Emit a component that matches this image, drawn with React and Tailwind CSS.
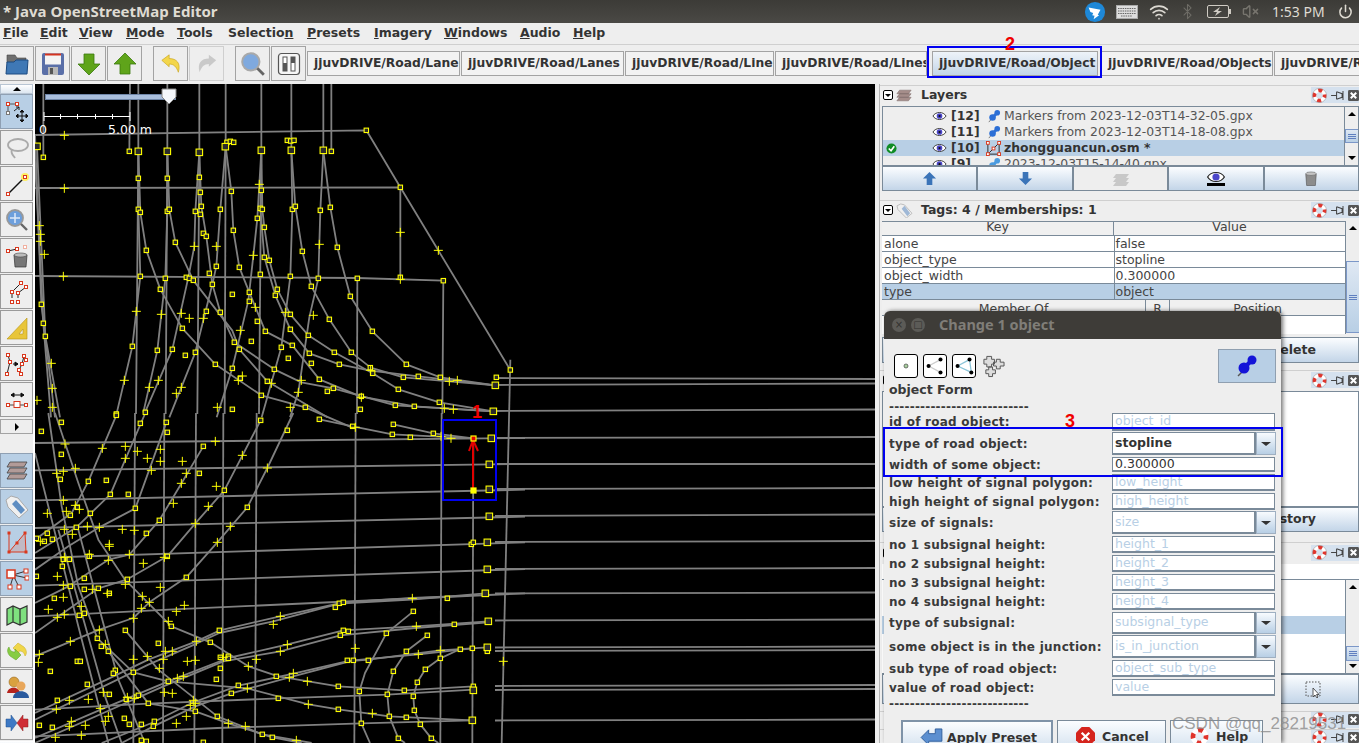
import { Wifi, Bluetooth, VolumeX, Power } from "lucide-react";

// Map data was read off two crops at 3x, so coordinates stay in crop space.
const top = ([x, y]) => [35 + x / 3, 84 + y / 3];
const low = ([x, y]) => [35 + x / 3, 413 + y / 3];

const TOP_WAYS = [
  [[0,153],[994,139],[1096,310],[1426,858]],
  [[0,312],[1096,310],[1096,586]],
  [[0,576],[967,582],[1225,590],[1222,990]],
  [[967,582],[966,990]],
  [[25,0],[25,220]],
  [[285,0],[283,202]],
  [[889,0],[889,202]],
  [[865,0],[865,200]],
  [[769,0],[769,200]],
  [[679,0],[679,200]],
  [[572,0],[572,188]],
  [[310,0],[310,202],[303,990]],
  [[397,0],[397,202],[392,990]],
  [[493,0],[493,205],[487,990]],
  [[572,188],[569,990]],
  [[679,200],[672,990]],
  [[865,200],[886,370],[907,490],[946,637],[1012,742],[1114,841],[1216,880],[1381,904]],
  [[769,200],[781,367],[802,502],[829,607],[883,706],[949,805],[1007,851],[1105,880],[1381,904]],
  [[679,200],[682,376],[688,430],[703,529],[727,616],[766,691],[820,754],[898,805],[1013,868],[1090,916],[1213,955],[1375,982]],
  [[679,200],[676,373],[688,520],[721,634],[766,736],[823,808],[913,841],[1006,860],[1150,877],[1381,904]],
  [[572,188],[589,322],[595,439],[613,550],[643,625],[691,742],[772,784],[853,886],[976,937],[1138,967],[1375,982]],
  [[493,205],[499,367],[514,457],[532,601],[556,685],[598,775],[718,856],[799,895],[895,913],[1081,964],[1375,982]],
  [[397,202],[403,376],[421,475],[475,589],[592,740],[613,796],[697,892],[877,1000]],
  [[310,202],[316,385],[334,499],[376,616],[442,733],[541,841],[679,934],[811,970],[950,1030]],
  [[865,200],[856,379],[850,583],[823,700],[790,925],[765,1000]],
  [[769,200],[772,376],[766,577],[739,790],[680,1000]],
  [[679,200],[667,403],[655,515],[640,650],[592,853],[545,1000]],
  [[572,188],[556,376],[544,547],[532,601],[481,805],[403,1000]],
  [[493,205],[481,382],[478,487],[460,580],[412,796],[330,985]],
  [[397,202],[397,382],[391,583],[367,799],[325,985]],
  [[310,202],[310,376],[316,577],[292,787],[245,988]],
  [[0,150],[19,661],[60,1000]],
  [[6,187],[31,757],[75,1000]],
  [[0,230],[25,718],[48,1000]],
];

const LOW_WAYS = [
  [[1426,-160],[1400,990]],
  [[1315,76],[1312,990]],
  [[300,0],[295,990]],
  [[388,0],[384,990]],
  [[483,0],[478,990]],
  [[565,0],[562,990]],
  [[665,0],[660,990]],
  [[962,0],[958,990]],
  [[1220,0],[1216,990]],
  [[0,90],[1470,75]],
  [[0,172],[1470,153]],
  [[0,262],[1470,230]],
  [[0,345],[1470,311]],
  [[0,435],[1470,388]],
  [[0,518],[1470,468]],
  [[0,610],[400,590],[1470,541]],
  [[1300,548],[1133,555],[925,568],[735,610],[555,652],[484,685],[340,740],[215,800],[0,900]],
  [[1350,541],[1130,560],[913,572],[715,625],[553,660],[466,700],[340,755],[0,920]],
  [[1360,625],[1140,640],[925,652],[755,695],[580,735],[400,805],[220,880],[0,975]],
  [[1360,628],[1140,645],[916,667],[736,715],[565,745],[385,820],[205,900],[0,990]],
  [[1357,703],[1215,712],[1000,740],[935,745],[775,782],[610,818],[470,870],[350,930],[200,990]],
  [[1312,706],[1150,724],[955,742],[763,793],[589,841],[481,880],[355,940],[260,990]],
  [[1315,830],[1057,845],[730,856],[340,872],[0,890]],
  [[1312,922],[979,931],[547,945],[0,970]],
  [[1315,820],[1108,832],[910,820],[730,790],[640,760],[526,688],[409,640],[270,500],[190,380],[130,210],[60,0]],
  [[1312,922],[1063,910],[910,889],[820,874],[637,826],[400,805],[295,778],[187,676],[130,520],[80,280],[40,0]],
  [[271,652],[370,770],[547,910],[682,964],[830,990]],
  [[220,715],[340,871],[481,895],[580,931],[712,973],[800,990]],
  [[1135,595],[1054,661],[990,780],[973,835],[979,931],[1005,990]],
  [[1177,667],[1114,715],[1075,775],[1057,845],[1063,910],[1090,976],[1110,990]],
  [[1276,708],[1216,736],[1171,769],[1147,808],[1135,850],[1138,892],[1156,934],[1189,976],[1210,990]],
  [[853,19],[953,40],[1072,64],[1195,70],[1315,76]],
  [[1075,34],[1195,61],[1315,76]],
  [[775,0],[697,165],[637,283],[547,388],[454,493],[343,568],[295,615],[193,650],[0,730]],
  [[677,22],[568,232],[481,331],[397,430],[277,499],[190,526],[85,600],[0,660]],
  [[505,100],[440,210],[373,322],[283,425],[220,440],[100,520],[0,570]],
  [[394,28],[301,286],[193,343],[100,400],[0,470]],
  [[331,0],[226,244],[124,343],[0,420]],
  [[244,7],[160,205],[110,300],[0,380]],
  [[130,350],[250,800],[330,990]],
  [[70,350],[210,850],[260,990]],
  [[0,120],[130,640],[220,990]],
];

const TOP_NODES = [[25,220],[283,202],[889,202],[310,283],[397,283],[493,280],[496,325],[589,322],[679,319],[310,376],[316,385],[397,382],[403,376],[481,382],[499,367],[496,391],[556,376],[676,373],[682,376],[667,403],[688,430],[772,376],[781,367],[856,379],[886,370],[595,439],[505,448],[514,457],[421,475],[334,499],[907,490],[802,502],[688,520],[703,529],[544,547],[613,550],[523,568],[676,571],[766,577],[316,577],[391,583],[454,580],[463,583],[475,589],[850,583],[967,583],[1096,580],[1225,590],[1096,310],[994,139],[532,601],[829,607],[376,616],[592,631],[643,625],[721,634],[727,616],[946,637],[643,652],[19,661],[514,682],[556,685],[766,691],[883,706],[25,718],[667,712],[442,733],[691,742],[766,736],[1012,742],[820,754],[31,757],[598,775],[649,772],[772,784],[292,787],[367,799],[412,796],[613,796],[739,790],[823,808],[898,805],[949,805],[451,814],[481,805],[760,823],[541,841],[829,838],[913,841],[1114,841],[592,853],[718,856],[1006,851],[1013,868],[1426,858],[1105,880],[1150,877],[1216,880],[1384,880],[616,883],[853,886],[697,892],[895,913],[877,922],[1090,916],[679,934],[979,937],[1213,955],[1081,964],[1138,967],[811,970],[592,976],[976,976],[331,985],[244,990],[576,175],[586,172],[596,175],[757,169],[767,171],[777,169]];
const TOP_BIG = [[310,202],[397,202],[493,205],[571,188],[679,199],[769,199],[865,199],[6,187],[1381,904],[1375,982]];
const TOP_CROSS = [[88,154],[88,313],[673,301],[13,425],[16,451],[16,472],[28,511],[85,577],[1096,445],[1096,586],[1210,499],[478,487],[544,487],[655,514],[853,481],[661,670],[304,682],[379,691],[439,688],[463,703],[505,703],[751,685],[835,694],[616,739],[49,838],[268,889],[343,910],[370,889],[439,910],[424,928],[610,889],[622,876],[709,898],[799,889],[790,925],[52,913],[52,970],[6,949],[547,970],[766,970],[979,940],[1007,859],[1243,892],[1267,889],[1228,973],[1255,976]];
const LOW_NODES = [[19,55],[79,28],[244,7],[316,31],[394,28],[397,58],[677,22],[757,52],[853,19],[953,40],[1075,34],[1072,64],[1126,73],[1195,61],[79,124],[505,100],[493,181],[76,199],[160,205],[214,202],[568,232],[226,244],[280,244],[127,283],[166,301],[106,307],[301,286],[637,283],[373,322],[124,343],[37,361],[52,379],[4,376],[28,385],[334,361],[397,430],[85,439],[103,439],[82,460],[163,430],[4,490],[148,496],[277,499],[454,493],[106,520],[148,529],[190,526],[58,556],[223,541],[133,607],[148,601],[409,640],[271,652],[187,676],[199,700],[220,715],[370,691],[526,688],[553,652],[127,745],[136,745],[46,775],[241,772],[235,781],[295,778],[556,766],[544,799],[400,805],[157,814],[223,844],[310,847],[274,859],[67,862],[340,871],[481,895],[589,841],[610,817],[556,733],[580,730],[580,736],[724,790],[730,856],[910,820],[910,889],[547,910],[268,916],[13,937],[52,943],[283,934],[319,934],[358,925],[355,940],[319,982],[334,985],[505,988],[682,964],[712,973],[901,583],[913,571],[925,568],[916,667],[925,652],[940,655],[955,742],[937,742],[1000,742],[973,835],[979,931],[1057,844],[1063,910],[1108,832],[1114,913],[1135,850],[1138,892],[1156,934],[1147,808],[1171,769],[1216,736],[1177,667],[1114,715],[1075,775],[1054,661],[1135,595],[1237,556],[1258,634],[1276,709],[1312,706],[1309,394],[1315,388],[1315,820],[1090,976],[1189,976],[1357,715]];
const LOW_BIG = [[1369,76],[1363,154],[1363,229],[1363,310],[1357,388],[1357,469],[1351,541],[1360,625],[1357,703],[1315,832],[1312,922]];
const LOW_CROSS = [[90,93],[202,106],[271,100],[307,115],[376,109],[541,85],[271,136],[337,136],[622,127],[376,145],[442,145],[65,181],[85,175],[121,166],[349,172],[454,181],[697,165],[544,220],[439,211],[520,280],[85,262],[121,277],[133,289],[37,301],[94,295],[415,271],[481,331],[88,349],[157,340],[193,343],[112,364],[262,349],[298,352],[586,340],[16,385],[547,388],[223,394],[223,400],[163,424],[283,424],[388,433],[88,433],[220,442],[325,451],[67,490],[85,517],[172,529],[271,514],[217,541],[376,523],[85,553],[322,550],[343,568],[319,586],[40,589],[139,580],[448,577],[424,595],[295,616],[67,613],[88,604],[400,625],[193,651],[106,685],[484,685],[211,694],[13,724],[10,748],[295,739],[337,730],[391,715],[412,715],[385,739],[457,745],[481,742],[373,766],[664,739],[640,760],[427,796],[445,790],[565,733],[736,610],[715,634],[757,695],[736,715],[775,781],[763,793],[817,805],[637,826],[205,838],[103,862],[160,859],[277,853],[298,856],[388,838],[412,841],[475,862],[466,877],[481,871],[196,886],[64,889],[220,910],[454,910],[424,931],[580,931],[631,940],[820,874],[109,925],[103,940],[151,937],[211,925],[139,967],[61,973],[1012,901],[961,706],[961,43],[1216,712],[1150,724],[1144,640],[1132,556],[1248,76],[1218,70],[784,982],[1405,745]];

// Long roads running off to the right edge of the canvas.
const EAST_ROADS = [[378,379],[385,383.5],[411,409.5],[438,437],[464,464],[489,488],[516,514.5],[542,541],[569,568],[593.5,592.5],[620.5,619.5],[647.5,646.5],[651,650],[686,685],[690,689],[720.5,719.5]];

const pts = (way, map) => way.map((p) => map(p).join(",")).join(" ");

function Square({ at, size = 4.4 }) {
  const [x, y] = at;
  return <rect x={x - size / 2} y={y - size / 2} width={size} height={size} fill="#2a2a2a" stroke="#ffff00" strokeWidth="1.1" />;
}

function Cross({ at }) {
  const [x, y] = at;
  return <path d={`M${x - 4.5} ${y}H${x + 4.5}M${x} ${y - 4.5}V${y + 4.5}`} stroke="#ffff00" strokeWidth="1" fill="none" />;
}

function MapCanvas() {
  return (
    <svg viewBox="35 84 840 659" className="w-[840px] h-[659px] block bg-black" fontFamily="'DejaVu Sans', sans-serif">
      <g fill="none" stroke="#808080" strokeWidth="1.8" strokeLinejoin="round">
        {TOP_WAYS.map((w, i) => <polyline key={i} points={pts(w, top)} />)}
        {LOW_WAYS.map((w, i) => <polyline key={i} points={pts(w, low)} />)}
        {EAST_ROADS.map(([a, b], i) => <line key={i} x1="495" y1={a} x2="875" y2={b} />)}
      </g>
      {TOP_NODES.map((p, i) => <Square key={i} at={top(p)} />)}
      {LOW_NODES.map((p, i) => <Square key={i} at={low(p)} />)}
      {TOP_BIG.map((p, i) => <Square key={i} at={top(p)} size={6.5} />)}
      {LOW_BIG.map((p, i) => <Square key={i} at={low(p)} size={6.5} />)}
      {TOP_CROSS.map((p, i) => <Cross key={i} at={top(p)} />)}
      {LOW_CROSS.map((p, i) => <Cross key={i} at={low(p)} />)}

      {/* selected stop line */}
      <path d="M473 490V440M469 451L473 440L478 451" fill="none" stroke="#e00000" strokeWidth="2" />
      <rect x="471" y="436" width="5" height="5" fill="#e00000" stroke="#ffff00" strokeWidth="1.2" />
      <rect x="471" y="488" width="5" height="5" fill="#ffff00" stroke="#ffff00" strokeWidth="1.2" />

      {/* zoom slider and scale */}
      <rect x="45.5" y="94.5" width="130" height="5" fill="#fff" stroke="#6f86a8" />
      <rect x="46" y="95" width="118" height="4" fill="#a9bedc" />
      <path d="M162 89H176V97L169 104L162 97Z" fill="#f4f7fb" stroke="#888" />
      <path d="M44 112V121M130 112V121M44 116.500H130M60.500 114V119M77.500 114V119M95.500 114V119M112.500 114V119" stroke="#fff" strokeWidth="1" fill="none" />
      <text x="39" y="134" fill="#fff" fontSize="12.500">0</text>
      <text x="108" y="134" fill="#fff" fontSize="12.500">5.00 m</text>
    </svg>
  );
}

function DingTalk() {
  return (
    <svg viewBox="0 0 24 24" className="w-[22px] h-[22px]">
      <circle cx="12" cy="12" r="11" fill="#1e88d8" />
      <path d="M5 7L18 9.500L15 15L16.500 15.500L10.500 20L11.500 16L9 15.500L10 13L7 12Z" fill="#fff" />
    </svg>
  );
}

function Tray() {
  return (
    <div className="ml-auto flex items-center text-[#bdb9b1]">
      <DingTalk />
      <svg viewBox="0 0 22 14" className="w-[22px] h-[14px] ml-[10px]">
        <rect x="0.500" y="0.500" width="21" height="13" fill="#ddd" stroke="#aaa" />
        <path d="M2 3.500H20M2 6H20M2 8.500H20M5 11H16" stroke="#666" strokeDasharray="1.500 .8" />
      </svg>
      <Wifi size={20} strokeWidth={2} className="ml-[11px] text-[#dcd9d2]" />
      <Bluetooth size={17} strokeWidth={1.5} className="ml-[10px] text-[#6e6c66]" />
      <svg viewBox="0 0 24 13" className="w-[24px] h-[13px] ml-[11px]">
        <rect x="0.500" y="0.500" width="21" height="12" rx="1.500" fill="none" stroke="#cfcbc3" />
        <rect x="22" y="4" width="2" height="5" fill="#cfcbc3" />
        <path d="M13 2L6 7H10L8 11L15 6H11Z" fill="#cfcbc3" />
      </svg>
      <VolumeX size={17} className="ml-[11px] text-[#77756e]" />
      <span className="ml-[13px] w-[56px] text-[14px] font-['Noto_Sans',sans-serif] text-[#dfdbd2]">1:53 PM</span>
      <Power size={15} strokeWidth={2.4} className="ml-[10px] mr-[6px] text-[#dfdbd2]" />
    </div>
  );
}

const MENUS = [
  ["", "F", "ile", 37],
  ["", "E", "dit", 39],
  ["", "V", "iew", 47],
  ["", "M", "ode", 51],
  ["", "T", "ools", 51],
  ["Selectio", "n", "", 79],
  ["", "P", "resets", 67],
  ["", "I", "magery", 70],
  ["", "W", "indows", 76],
  ["", "A", "udio", 53],
  ["", "H", "elp", 36],
];

function MenuBar() {
  return (
    <div className="h-[21px] flex items-center pl-[3px] bg-[#eeeeee] font-bold text-[12.500px] text-[#333333]">
      {MENUS.map(([a, u, b, w]) => (
        <span key={u + b} className="whitespace-nowrap" style={{ width: w }}>
          {a}<span className="underline">{u}</span>{b}
        </span>
      ))}
    </div>
  );
}

function ToolIcon({ name }) {
  switch (name) {
    case "open":
      return (
        <svg viewBox="0 0 24 24" className="w-[24px] h-[24px]">
          <path d="M2 3H10L12 6H21V11H2Z" fill="#6f6f6f" stroke="#444" strokeWidth=".6" />
          <path d="M1 22L2 10H9L11 8H23L22 22Z" fill="#3f78b5" stroke="#1c4a80" />
        </svg>
      );
    case "save":
      return (
        <svg viewBox="0 0 24 24" className="w-[24px] h-[24px]">
          <rect x="1" y="1" width="22" height="22" rx="2" fill="#5a6fa8" />
          <rect x="4" y="1.500" width="16" height="11" fill="#f4f4f4" />
          <rect x="4" y="1.500" width="16" height="2" fill="#d4341f" />
          <rect x="7" y="15" width="10" height="8" fill="#b8b8b8" />
          <rect x="9" y="16" width="3" height="6" fill="#555" />
        </svg>
      );
    case "down":
      return (
        <svg viewBox="0 0 24 24" className="w-[24px] h-[24px]">
          <path d="M7 2H17V12H23L12 23L1 12H7Z" fill="#5fa41a" stroke="#3a7a0c" strokeWidth=".8" />
        </svg>
      );
    case "up":
      return (
        <svg viewBox="0 0 24 24" className="w-[24px] h-[24px]">
          <path d="M7 22H17V12H23L12 1L1 12H7Z" fill="#5fa41a" stroke="#3a7a0c" strokeWidth=".8" />
        </svg>
      );
    case "undo":
      return (
        <svg viewBox="0 0 24 24" className="w-[22px] h-[22px]">
          <path d="M2 8L10 2V6C18 6 23 11 20 21C18 15 15 12 10 12V15Z" fill="#f3d64b" stroke="#c9a51a" strokeWidth=".7" />
        </svg>
      );
    case "redo":
      return (
        <svg viewBox="0 0 24 24" className="w-[22px] h-[22px]">
          <path d="M22 8L14 2V6C6 6 1 11 4 21C6 15 9 12 14 12V15Z" fill="#c9c9c9" />
        </svg>
      );
    case "zoom":
      return (
        <svg viewBox="0 0 24 24" className="w-[26px] h-[26px]">
          <circle cx="10" cy="10" r="8" fill="#7fa9de" stroke="#a9a9a9" strokeWidth="1.800" />
          <path d="M16 16L22 22" stroke="#666" strokeWidth="2.600" />
        </svg>
      );
    default:
      return (
        <svg viewBox="0 0 24 24" className="w-[24px] h-[24px]">
          <rect x="1.500" y="1.500" width="21" height="21" rx="3" fill="#f6f6f6" stroke="#555" strokeWidth="1.200" />
          <rect x="6" y="5" width="4" height="14" fill="#fff" stroke="#555" />
          <rect x="14" y="5" width="4" height="14" fill="#fff" stroke="#555" />
          <rect x="6" y="11" width="4" height="8" fill="#555" />
          <rect x="14" y="5" width="4" height="6" fill="#555" />
        </svg>
      );
  }
}

function ToolButton({ name, disabled }) {
  return (
    <div className={`w-[35px] h-[35px] shrink-0 flex items-center justify-center border ${disabled ? "border-[#cfcfcf]" : "border-[#a3a3a3]"} bg-[#eeeeee]`}>
      <ToolIcon name={name} />
    </div>
  );
}

function PresetButton({ label, w, active }) {
  return (
    <div
      style={{ width: w }}
      className={`h-[25px] shrink-0 flex items-center pl-[6px] overflow-hidden whitespace-nowrap font-bold text-[12.300px] text-[#333333] border border-[#a3a3a3] ${active ? "bg-gradient-to-b from-[#eef3f9] to-[#c3d5e8]" : "bg-[#f2f2f2]"}`}
    >
      {label}
    </div>
  );
}

function Toolbar() {
  return (
    <div className="h-[40px] flex items-center gap-[1px] -ml-[1px] border-t border-[#cfcfcf] bg-[#eeeeee] pb-[2px]">
      <ToolButton name="open" />
      <ToolButton name="save" />
      <ToolButton name="down" />
      <ToolButton name="up" />
      <div className="w-[9px] shrink-0" />
      <ToolButton name="undo" />
      <ToolButton name="redo" disabled />
      <div className="w-[9px] shrink-0" />
      <ToolButton name="zoom" />
      <ToolButton name="prefs" />
      <PresetButton label="jjuvDRIVE/Road/Lane" w={153} />
      <PresetButton label="jjuvDRIVE/Road/Lanes" w={163} />
      <PresetButton label="jjuvDRIVE/Road/Line" w={149} />
      <PresetButton label="jjuvDRIVE/Road/Lines" w={152} />
      <div className="w-[3px] shrink-0" />
      <PresetButton label="jjuvDRIVE/Road/Object" w={166} active />
      <div className="w-[1px] shrink-0" />
      <PresetButton label="jjuvDRIVE/Road/Objects" w={172} />
      <PresetButton label="jjuvDRIVE/Road/Objects" w={100} />
    </div>
  );
}

const RED = "#d9381e";

function SideIcon({ name }) {
  const node = (x, y, c = RED) => <rect x={x - 1.500} y={y - 1.500} width="3" height="3" fill="#fff" stroke={c} />;
  const shapes = {
    select: (
      <>
        <path d="M3 4H11M3 4V12" stroke="#555" fill="none" />
        {node(3, 4)}{node(12, 4)}{node(3, 13, "#777")}
        <path d="M9 11L14 7M14 7H11M14 7V10" stroke="#222" fill="none" />
        <path d="M17 10V22M11 16H23M17 10L15 12H19ZM17 22L15 20H19ZM11 16L13 14V18ZM23 16L21 14V18Z" stroke="#111" fill="#111" />
      </>
    ),
    lasso: (
      <>
        <ellipse cx="13" cy="9" rx="10" ry="6" fill="none" stroke="#aaa" strokeWidth="1.800" />
        <path d="M7 13C5 18 9 20 10 22" fill="none" stroke="#aaa" strokeWidth="1.800" />
      </>
    ),
    draw: (
      <>
        <path d="M3 22L20 5" stroke="#111" strokeWidth="1.500" />
        <circle cx="20" cy="5" r="4" fill="#ffef60" />
        {node(3, 22)}{node(20, 5)}
      </>
    ),
    zoom: (
      <>
        <circle cx="10" cy="10" r="8" fill="#6d9fdc" stroke="#999" strokeWidth="1.800" />
        <path d="M10 5V15M5 10H15" stroke="#dfeaf7" strokeWidth="1.500" />
        <path d="M16 16L22 22" stroke="#666" strokeWidth="2.400" />
      </>
    ),
    delete: (
      <>
        <path d="M3 7L12 5" stroke="#222" />
        {node(3, 7)}{node(12, 5)}{node(20, 3, "#f0b0a0")}
        <path d="M9 11H22L21 23H10Z" fill="#777" stroke="#333" strokeWidth=".7" />
        <ellipse cx="15.500" cy="11" rx="6.500" ry="2" fill="#bbb" stroke="#444" strokeWidth=".6" />
      </>
    ),
    parallel: (
      <>
        <path d="M7 18V12L16 3M13 18V13L21 7" stroke="#222" fill="none" />
        {node(7, 22)}{node(7, 12)}{node(16, 3)}{node(13, 22)}{node(13, 13)}{node(21, 7)}
      </>
    ),
    angle: <path d="M2 23L22 2V23ZM14 18H18V13Z" fill="#e8c53a" fillRule="evenodd" stroke="#b69417" strokeWidth=".6" />,
    improve: (
      <>
        <path d="M3 3L5 10L2 22M19 4L17 12L14 18L16 22" stroke="#222" fill="none" />
        <path d="M8 12H13M13 12L10 10V14Z" stroke="#111" fill="#111" />
        {node(3, 3)}{node(5, 10)}{node(2, 22)}{node(19, 4)}{node(21, 8)}{node(17, 12)}{node(14, 18)}{node(16, 22)}
      </>
    ),
    split: (
      <>
        <path d="M6 7H19M6 7L9 5V9ZM19 7L16 5V9Z" stroke="#111" fill="#111" />
        <path d="M3 17H22" stroke="#444" />
        <rect x="9" y="13.500" width="6" height="6" fill="#fff" stroke={RED} />
        {node(3, 17)}{node(21, 17)}
      </>
    ),
    layers: (
      <>
        <path d="M5 3H22L19 8H2Z" fill="#b29b98" stroke="#444" strokeWidth=".8" />
        <path d="M5 9H22L19 14H2Z" fill="#b29b98" stroke="#444" strokeWidth=".8" />
        <path d="M5 15H22L19 20H2Z" fill="#b29b98" stroke="#444" strokeWidth=".8" />
      </>
    ),
    tag: (
      <>
        <path d="M1 5L6 1L13 3L23 15L14 23L3 12Z" fill="#f0f0f0" stroke="#aaa" />
        <path d="M7 9L11 5L20 15L16 19Z" fill="#5f8ec2" />
      </>
    ),
    relation: (
      <>
        <path d="M4 2V21H21L20 2L4 21" fill="#c9a3a3" fillOpacity=".5" stroke={RED} />
        {[[4, 2], [20, 2], [4, 21], [21, 21], [12, 12]].map(([x, y]) => <rect key={x + "" + y} x={x - 1.500} y={y - 1.500} width="3" height="3" fill={RED} />)}
      </>
    ),
    tree: (
      <>
        <path d="M8 8L21 4M8 8L22 11M8 10L5 20M9 10L14 20" stroke="#333" fill="none" />
        <rect x="2" y="3" width="8" height="8" fill="#fff" stroke={RED} strokeWidth="1.500" />
        {[[21, 4], [22, 11], [5, 20], [14, 20]].map(([x, y]) => <rect key={x} x={x - 2} y={y - 2} width="4" height="4" fill="#fff" stroke={RED} />)}
      </>
    ),
    map: <path d="M2 6L8 3L15 6L22 3V19L15 22L8 19L2 22ZM8 3V19M15 6V22" fill="#7fe07f" stroke="#333" strokeWidth="1.200" />,
    sync: (
      <>
        <path d="M13 4L19 8C22 11 22 15 20 17C19 13 17 12 14 12V15L8 9Z" fill="#efd64a" stroke="#c7a81d" strokeWidth=".5" />
        <path d="M11 21L5 17C2 14 2 10 4 8C5 12 7 13 10 13V10L16 16Z" fill="#86cc43" stroke="#5d9c22" strokeWidth=".5" />
      </>
    ),
    users: (
      <>
        <circle cx="9" cy="7" r="5" fill="#d9a13f" stroke="#8a5a14" strokeWidth=".5" />
        <path d="M2 18C3 11 14 11 15 18Z" fill="#b6231d" />
        <circle cx="16" cy="11" r="4.500" fill="#e8a65a" />
        <path d="M8 23C8 14 24 14 24 23Z" fill="#2a5a9e" />
      </>
    ),
    conflict: (
      <>
        <path d="M1 8H6V4L12 12L6 20V16H1Z" fill="#3e79c4" stroke="#1f4f8e" strokeWidth=".5" />
        <path d="M23 8H18V4L12 12L18 20V16H23Z" fill="#cf2d35" stroke="#8e1f1f" strokeWidth=".5" />
      </>
    ),
  };
  return <svg viewBox="0 0 24 24" className="w-[24px] h-[24px]">{shapes[name]}</svg>;
}

function SideButton({ name, on }) {
  return (
    <div className={`w-[33px] h-[35px] shrink-0 flex items-center justify-center border mb-[1px] ${on ? "bg-[#b8cfe5] border-[#8fa0b3]" : "bg-[#eeeeee] border-[#9a9a9a]"}`}>
      <SideIcon name={name} />
    </div>
  );
}

function ArrowUp() {
  return <div className="w-0 h-0 border-l-[4px] border-r-[4px] border-b-[4px] border-l-transparent border-r-transparent border-b-black" />;
}
function ArrowDown() {
  return <div className="w-0 h-0 border-l-[4px] border-r-[4px] border-t-[4px] border-l-transparent border-r-transparent border-t-black" />;
}

function SideBar() {
  return (
    <div className="w-[35px] h-[659px] shrink-0 flex flex-col overflow-hidden border-r-2 border-white bg-[#eeeeee]">
      <div className="h-[10px] w-[33px] shrink-0 flex items-center justify-center bg-gradient-to-b from-white to-[#dce6f0] border border-[#b8c5d3]"><ArrowUp /></div>
      {["select"].map((n) => <SideButton key={n} name={n} on />)}
      {["lasso", "draw", "zoom", "delete", "parallel", "angle", "improve", "split"].map((n) => <SideButton key={n} name={n} />)}
      <div className="h-[15px] w-[33px] shrink-0 mt-[1px] flex items-center justify-center border border-[#a3a3a3]">
        <div className="w-0 h-0 border-t-[4px] border-b-[4px] border-l-[4px] border-t-transparent border-b-transparent border-l-black" />
      </div>
      <div className="h-[19px] shrink-0" />
      {["layers", "tag", "relation", "tree"].map((n) => <SideButton key={n} name={n} on />)}
      {["map", "sync", "users", "conflict"].map((n) => <SideButton key={n} name={n} />)}
      <div className="h-[8px] w-[33px] shrink-0 flex items-center justify-center bg-gradient-to-b from-white to-[#dce6f0]"><ArrowDown /></div>
    </div>
  );
}

function Buoy() {
  return (
    <svg viewBox="0 0 16 16" className="w-[15px] h-[15px] shrink-0">
      <circle cx="8" cy="8" r="5.500" fill="none" stroke="#fff" strokeWidth="4" />
      <circle cx="8" cy="8" r="5.500" fill="none" stroke="#e0342c" strokeWidth="4" strokeDasharray="4.300 4.340" strokeDashoffset="2" />
      <circle cx="8" cy="8" r="7.500" fill="none" stroke="#999" strokeWidth=".6" />
    </svg>
  );
}

function Pin() {
  return (
    <svg viewBox="0 0 16 12" className="w-[15px] h-[11px] shrink-0 ml-[3px]">
      <path d="M1 6H7M7 2V10M7 2L13 4V8L7 10M14 1V11" fill="none" stroke="#444" strokeWidth="1.100" />
    </svg>
  );
}

function CloseBox() {
  return (
    <svg viewBox="0 0 12 12" className="w-[11px] h-[11px] shrink-0 ml-[3px]">
      <rect width="12" height="12" rx="1.500" fill="#555" />
      <path d="M3 3L9 9M9 3L3 9" stroke="#fff" strokeWidth="2.200" />
    </svg>
  );
}

function PanelControls() {
  return (
    <div className="ml-auto flex items-center h-[16px] pl-[1px] bg-[#d5e1ee]">
      <Buoy /><Pin /><CloseBox />
    </div>
  );
}

function PanelHeader({ icon, title, h = 21 }) {
  return (
    <div style={{ height: h }} className="shrink-0 flex items-center border-t border-[#cfcfcf] pl-[3px] pb-[2px] font-bold text-[12.500px] text-[#333333]">
      {icon !== undefined && (
        <>
          <div className="w-[10px] h-[10px] shrink-0 flex items-center justify-center border border-black rounded-[2px] bg-white">
            <div className="w-0 h-0 border-l-[3px] border-r-[3px] border-t-[3px] border-l-transparent border-r-transparent border-t-black" />
          </div>
          <div className="w-[18px] h-[16px] ml-[2px] flex items-center justify-center">{icon}</div>
          <span className="ml-[8px]">{title}</span>
        </>
      )}
      <PanelControls />
    </div>
  );
}

function Scrollbar({ thumbTop, thumbH }) {
  return (
    <div className="w-[14px] h-full shrink-0 relative flex flex-col justify-between items-center border-l border-[#7a8a99] bg-[#eeeeee] py-[5px]">
      <ArrowUp />
      <div style={{ top: thumbTop, height: thumbH }} className="absolute left-0 w-[14px] flex flex-col items-center justify-center gap-[1px] border border-[#7b97c8] bg-gradient-to-b from-[#dfe8f3] to-[#b8cfe5]">
        <div className="w-[8px] h-[1px] bg-[#5f7fc0]" />
        <div className="w-[8px] h-[1px] bg-[#5f7fc0]" />
        <div className="w-[8px] h-[1px] bg-[#5f7fc0]" />
      </div>
      <ArrowDown />
    </div>
  );
}

function Eye() {
  return (
    <svg viewBox="0 0 16 10" className="w-[15px] h-[10px] shrink-0">
      <path d="M1 5C4 0 12 0 15 5C12 10 4 10 1 5Z" fill="#fff" stroke="#333" />
      <circle cx="8" cy="5" r="3" fill="#4b46c9" />
      <circle cx="8" cy="5" r="1.200" fill="#111" />
    </svg>
  );
}

function Marker({ color = "#2c6fd6" }) {
  return (
    <svg viewBox="0 0 16 16" className="w-[15px] h-[15px] shrink-0">
      <path d="M8 8L3 14" stroke="#777" />
      <circle cx="7" cy="9" r="3.500" fill={color} />
      <circle cx="12" cy="4" r="3" fill={color} />
      <path d="M7 9L12 4" stroke={color} strokeWidth="3" />
    </svg>
  );
}

function LayerRow({ n, name, active, bold, check, icon }) {
  return (
    <div className={`h-[16px] shrink-0 flex items-center text-[12.400px] ${active ? "bg-[#b8cfe5]" : ""}`}>
      <div className="w-[49px] pl-[3px] shrink-0">
        {check && (
          <svg viewBox="0 0 12 12" className="w-[11px] h-[11px]">
            <circle cx="6" cy="6" r="5.500" fill="#0f8c25" />
            <path d="M3 6L5.500 8.500L9 3.500" stroke="#fff" strokeWidth="1.800" fill="none" />
          </svg>
        )}
      </div>
      <Eye />
      <span className="w-[35px] ml-[4px] font-bold shrink-0 text-[#333]">{n}</span>
      {icon}
      <span className={`ml-[3px] whitespace-nowrap ${bold ? "font-bold text-[#333]" : "text-[#555]"}`}>{name}</span>
    </div>
  );
}

function DataLayerIcon() {
  return (
    <svg viewBox="0 0 16 16" className="w-[15px] h-[15px] shrink-0">
      <path d="M2 14V2M2 14H14M14 14V2L2 14" fill="none" stroke="#222" />
      {[[2, 2], [14, 2], [2, 14], [14, 14], [8, 8]].map(([x, y]) => <rect key={x + "" + y} x={x - 1.500} y={y - 1.500} width="3" height="3" fill="#fff" stroke="#d9381e" />)}
    </svg>
  );
}

function LayerButton({ children }) {
  return (
    <div className="flex-1 h-[25px] flex items-center justify-center border border-[#7a8a99] bg-gradient-to-b from-[#fbfdff] to-[#c3d5e8]">
      {children}
    </div>
  );
}

function LayersPanel() {
  return (
    <>
      <PanelHeader
        title="Layers"
        icon={
          <svg viewBox="0 0 18 14" className="w-[16px] h-[13px]">
            <path d="M4 1H17L14 5H1ZM4 5H17L14 9H1ZM4 9H17L14 13H1Z" fill="#a58d8a" stroke="#7d6b69" strokeWidth=".6" />
          </svg>
        }
      />
      <div className="h-[60px] shrink-0 flex ml-[2px] border border-[#7a8a99] overflow-hidden">
        <div className="flex-1 flex flex-col pt-[1px]">
          <LayerRow n="[12]" name="Markers from 2023-12-03T14-32-05.gpx" icon={<Marker />} />
          <LayerRow n="[11]" name="Markers from 2023-12-03T14-18-08.gpx" icon={<Marker />} />
          <LayerRow n="[10]" name="zhongguancun.osm *" active bold check icon={<DataLayerIcon />} />
          <LayerRow n=" [9]" name="2023-12-03T15-14-40.gpx" icon={<Marker color="#4a9be0" />} />
        </div>
        <Scrollbar thumbTop={22} thumbH={14} />
      </div>
      <div className="h-[26px] shrink-0 flex ml-[2px]">
        <LayerButton>
          <svg viewBox="0 0 16 16" className="w-[15px] h-[15px]"><path d="M5 15H11V8H15L8 1L1 8H5Z" fill="#3b74b8" /></svg>
        </LayerButton>
        <LayerButton>
          <svg viewBox="0 0 16 16" className="w-[15px] h-[15px]"><path d="M5 1H11V8H15L8 15L1 8H5Z" fill="#3b74b8" /></svg>
        </LayerButton>
        <div className="flex-1 h-[25px] flex items-center justify-center border border-[#7a8a99] bg-[#eeeeee]">
          <svg viewBox="0 0 18 16" className="w-[18px] h-[16px]">
            <path d="M4 3H17L14 7H1ZM4 7H17L14 11H1ZM4 11H17L14 15H1Z" fill="#c8c8c8" />
          </svg>
        </div>
        <LayerButton>
          <div className="flex flex-col items-center">
            <svg viewBox="0 0 16 10" className="w-[20px] h-[12px]">
              <path d="M1 5C4 0 12 0 15 5C12 10 4 10 1 5Z" fill="#fff" stroke="#222" />
              <circle cx="8" cy="5" r="3" fill="#4b46c9" />
            </svg>
            <div className="w-[18px] h-[3px] bg-black" />
          </div>
        </LayerButton>
        <LayerButton>
          <svg viewBox="0 0 16 18" className="w-[14px] h-[17px]">
            <path d="M2 4H14L13 17H3Z" fill="#8c8c8c" stroke="#444" strokeWidth=".6" />
            <ellipse cx="8" cy="3.500" rx="6" ry="2" fill="#c4c4c4" stroke="#555" strokeWidth=".6" />
          </svg>
        </LayerButton>
      </div>
    </>
  );
}

const TAGS = [
  ["alone", "false"],
  ["object_type", "stopline"],
  ["object_width", "0.300000"],
  ["type", "object"],
];

function TagsPanel() {
  return (
    <>
      <div className="h-[8px] shrink-0" />
      <PanelHeader
        title="Tags: 4 / Memberships: 1"
        icon={
          <svg viewBox="0 0 18 16" className="w-[17px] h-[15px]">
            <path d="M1 3L5 1L9 2L17 11L11 16L2 7Z" fill="#f0f0f0" stroke="#bbb" />
            <path d="M6 6L9 3L15 11L12 14Z" fill="#9fb8d6" />
          </svg>
        }
      />
      <div className="h-[113px] shrink-0 flex ml-[2px] overflow-hidden text-[12.500px] text-[#444]">
        <div className="flex-1 flex flex-col">
          <div className="h-[14px] shrink-0 flex border-t border-[#7a8a99]">
            <div className="flex-1 text-center leading-[9px] border-r border-[#7a8a99] bg-[#f0f0f0]">Key</div>
            <div className="flex-1 text-center leading-[9px] bg-[#f0f0f0]">Value</div>
          </div>
          {TAGS.map(([k, v]) => (
            <div key={k} className={`h-[16px] shrink-0 flex border-t border-[#7a8a99] leading-[15px] ${k === "type" ? "bg-[#b8cfe5]" : "bg-white"}`}>
              <div className="flex-1 pl-[2px] border-r border-[#7a8a99]">{k}</div>
              <div className="flex-1 pl-[1px]">{v}</div>
            </div>
          ))}
          <div className="h-[16px] shrink-0 flex border-t border-[#7a8a99] bg-[#f0f0f0]">
            <div className="w-[264px] text-center border-r border-[#7a8a99]">Member Of</div>
            <div className="w-[24px] text-center border-r border-[#7a8a99]">R</div>
            <div className="flex-1 text-center">Position</div>
          </div>
          <div className="flex-1 bg-white border-t border-[#7a8a99]" />
        </div>
        <Scrollbar thumbTop={40} thumbH={72} />
      </div>
    </>
  );
}

function WideButton({ label, h = 26 }) {
  return (
    <div style={{ height: h }} className="shrink-0 ml-[2px] flex items-center justify-end pr-[42px] font-bold text-[12.500px] text-[#333] border border-[#7a8a99] bg-gradient-to-b from-[#fbfdff] to-[#c3d5e8]">
      {label}
    </div>
  );
}

function RightPanel() {
  return (
    <div className="w-[480px] h-[659px] shrink-0 flex flex-col overflow-hidden bg-[#eeeeee] border-l border-[#b5b5b5]">
      <div className="h-[1px] shrink-0" />
      <LayersPanel />
      <TagsPanel />
      <div className="h-[3px] shrink-0" />
      <WideButton label="Delete" />
      <div className="h-[7px] shrink-0" />
      <PanelHeader title="" icon="" />
      <div className="h-[116px] shrink-0 ml-[2px] bg-white border border-[#7a8a99]" />
      <WideButton label="History" h={25} />
      <div className="h-[10px] shrink-0" />
      <PanelHeader title="" icon="" h={22} />
      <div className="h-[15px] shrink-0 ml-[2px] bg-white" />
      <div className="h-[95px] shrink-0 flex ml-[2px] border-y border-[#7a8a99] bg-white">
        <div className="flex-1 flex flex-col pt-[36px]">
          <div className="h-[18px] bg-[#b8cfe5]" />
        </div>
        <Scrollbar thumbTop={66} thumbH={15} />
      </div>
      <div className="h-[30px] shrink-0 ml-[2px] flex items-center justify-end pr-[36px] border border-[#7a8a99] bg-gradient-to-b from-[#fbfdff] to-[#c3d5e8]">
        <svg viewBox="0 0 18 18" className="w-[18px] h-[18px]">
          <rect x="2" y="2" width="14" height="14" fill="none" stroke="#555" strokeDasharray="1.500 1.500" />
          <path d="M9 8V17L11 15L13 18L14 17L12.500 14.500H15Z" fill="#fff" stroke="#333" strokeWidth=".8" />
        </svg>
      </div>
      <div className="h-[7px] shrink-0" />
      <PanelHeader h={18} />
      <PanelHeader h={18} />
    </div>
  );
}

function Field({ value, h = 17, dim = true }) {
  return (
    <div style={{ height: h }} className={`w-[163px] shrink-0 flex items-center pl-[2px] border border-[#7a8a99] border-b-2 bg-white font-normal tracking-normal text-[12.500px] ${dim ? "text-[#b8cfe5]" : "text-[#333]"}`}>
      {value}
    </div>
  );
}

function Combo({ value, h = 23, dim = true }) {
  return (
    <div style={{ height: h }} className="w-[164px] shrink-0 flex">
      <div className={`flex-1 flex items-center pl-[2px] border border-[#7a8a99] border-b-2 border-r-2 bg-white tracking-normal text-[12.500px] ${dim ? "font-normal text-[#b8cfe5]" : "font-bold text-[#333]"}`}>
        {value}
      </div>
      <div className="w-[20px] flex items-center justify-center border border-[#9fb0c2] bg-gradient-to-b from-[#f8fbfe] to-[#b8cfe5]">
        <div className="w-0 h-0 border-l-[5px] border-r-[5px] border-t-[4px] border-l-transparent border-r-transparent border-t-[#333]" />
      </div>
    </div>
  );
}

function FormRow({ label, h, gap = 2, children }) {
  return (
    <div style={{ height: h, marginBottom: gap }} className="flex items-center font-bold text-[12px] text-[#3a3a3a] tracking-[.25px]">
      <span className="w-[228px] shrink-0 pl-[5px] whitespace-nowrap">{label}</span>
      {children}
    </div>
  );
}

function KindBox({ children }) {
  return (
    <div className="w-[24px] h-[24px] shrink-0 border border-black rounded-[3px] bg-white">
      <svg viewBox="0 0 24 24" className="w-full h-full">{children}</svg>
    </div>
  );
}

const dot = (x, y) => <circle key={x + "," + y} cx={x} cy={y} r="2.200" fill="#000" />;

function PresetDialog() {
  return (
    <div className="absolute left-[884px] top-[311px] w-[397px] h-[432px] flex flex-col bg-[#eeeeee] rounded-t-[6px] overflow-hidden shadow-[2px_0_4px_rgba(0,0,0,.55)]">
      <div className="h-[28px] shrink-0 flex items-center pl-[8px] bg-[#3e3c38]">
        {["×", "□"].map((c) => (
          <div key={c} className="w-[14px] h-[14px] mr-[5px] flex items-center justify-center rounded-full bg-[#5c5b57] text-[10px] leading-none text-[#33322f]">{c}</div>
        ))}
        <span className="ml-[9px] font-bold text-[14.500px] font-['Noto_Sans',sans-serif] text-[#807e78]">Change 1 object</span>
      </div>
      <div className="h-[44px] shrink-0 flex items-start pl-[10px] pr-[5px] pt-[10px]">
        <div className="flex gap-[5px] mt-[5px]">
          <KindBox><circle cx="12" cy="12" r="2.200" fill="#a9d0a0" stroke="#333" strokeWidth=".7" /></KindBox>
          <KindBox>
            <path d="M5 12L18 5M5 12L18 19" stroke="#ccc" strokeWidth="1.400" />
            {dot(5, 12)}{dot(18, 5)}{dot(18, 19)}
          </KindBox>
          <KindBox>
            <path d="M5 12L18 5L20 19Z" fill="none" stroke="#8bc4d8" strokeWidth="1.400" />
            {dot(5, 12)}{dot(18, 5)}{dot(20, 19)}
          </KindBox>
          <svg viewBox="0 0 24 24" className="w-[23px] h-[24px] ml-[1px]">
            <path d="M5 2H10V5H13V10H10V13H5V10H2V5H5ZM15 5H19V8H23V12H19V15H15V12H12V8H15ZM7 13H11V16H14V20H11V23H7V20H4V16H7Z" fill="#ddd" stroke="#555" strokeWidth="1" />
          </svg>
        </div>
        <div className="ml-auto w-[58px] h-[34px] flex items-center justify-center border border-[#8f9fb0] bg-[#b8cfe5]">
          <svg viewBox="0 0 24 24" className="w-[24px] h-[24px]">
            <path d="M10 15L3 22" stroke="#555" strokeWidth="1.500" />
            <circle cx="9" cy="14" r="5.500" fill="#1414d8" />
            <circle cx="17" cy="6" r="4.500" fill="#1414d8" />
            <path d="M9 14L17 6" stroke="#1414d8" strokeWidth="4" />
          </svg>
        </div>
      </div>
      <div className="h-[16px] shrink-0 pl-[5px] font-bold text-[12.500px] text-[#3a3a3a] leading-[14px]">object Form</div>
      <div className="h-[13px] shrink-0 pl-[5px] pt-[2px] font-bold text-[12px] text-[#3a3a3a] leading-[12px] tracking-[.2px]">---------------------------</div>
      <div className="flex flex-col pt-[1px]">
        <FormRow label="id of road object:" h={18} gap={1}><Field value="object_id" h={18} /></FormRow>
        <FormRow label="type of road object:" h={23} gap={2}><Combo value="stopline" dim={false} /></FormRow>
        <FormRow label="width of some object:" h={15} gap={2}><Field value="0.300000" h={15} dim={false} /></FormRow>
        <FormRow label="low height of signal polygon:" h={17} gap={2}><Field value="low_height" /></FormRow>
        <FormRow label="high height of signal polygon:" h={17} gap={1}><Field value="high_height" /></FormRow>
        <FormRow label="size of signals:" h={23} gap={2}><Combo value="size" /></FormRow>
        <FormRow label="no 1 subsignal height:" h={17} gap={2}><Field value="height_1" /></FormRow>
        <FormRow label="no 2 subsignal height:" h={17} gap={2}><Field value="height_2" /></FormRow>
        <FormRow label="no 3 subsignal height:" h={17} gap={2}><Field value="height_3" /></FormRow>
        <FormRow label="no 4 subsignal height:" h={17} gap={2}><Field value="height_4" /></FormRow>
        <FormRow label="type of subsignal:" h={22} gap={1}><Combo value="subsignal_type" h={22} /></FormRow>
        <FormRow label="some object is in the junction:" h={23} gap={2}><Combo value="is_in_junction" /></FormRow>
        <FormRow label="sub type of road object:" h={17} gap={2}><Field value="object_sub_type" /></FormRow>
        <FormRow label="value of road object:" h={17} gap={2}><Field value="value" /></FormRow>
      </div>
      <div className="h-[14px] shrink-0 pl-[5px] font-bold text-[12px] text-[#3a3a3a] leading-[12px] tracking-[.2px]">---------------------------</div>
      <div className="flex pl-[17px] mt-[8px] gap-[4px] font-bold text-[12.500px] text-[#333]">
        <div className="w-[152px] h-[30px] shrink-0 flex items-start pt-[7px] pl-[17px] border-2 border-[#7f93a8] bg-gradient-to-b from-[#fbfdff] to-[#d5e2ef]">
          <svg viewBox="0 0 24 18" className="w-[23px] h-[17px] mr-[4px] -mt-[1px] shrink-0">
            <path d="M1 10L9 2V6H16V1H23V14H9V18Z" fill="#5c8fd0" stroke="#2f5e9c" />
          </svg>
          Apply Preset
        </div>
        <div className="w-[109px] h-[30px] shrink-0 flex items-start pt-[7px] pl-[18px] border border-[#7a8a99] bg-gradient-to-b from-[#fbfdff] to-[#d5e2ef]">
          <svg viewBox="0 0 20 20" className="w-[19px] h-[19px] mr-[7px] -mt-[1px] shrink-0">
            <path d="M6 0H14L20 6V14L14 20H6L0 14V6Z" fill="#d5241d" />
            <path d="M6 6L14 14M14 6L6 14" stroke="#fff" strokeWidth="2.400" />
          </svg>
          Cancel
        </div>
        <div className="w-[93px] h-[30px] shrink-0 flex items-start pt-[7px] pl-[19px] border border-[#7a8a99] bg-gradient-to-b from-[#fbfdff] to-[#d5e2ef]">
          <svg viewBox="0 0 16 16" className="w-[19px] h-[19px] mr-[7px] -mt-[1px] shrink-0">
            <circle cx="8" cy="8" r="5.500" fill="none" stroke="#fff" strokeWidth="4" />
            <circle cx="8" cy="8" r="5.500" fill="none" stroke="#e0342c" strokeWidth="4" strokeDasharray="4.300 4.340" strokeDashoffset="2" />
          </svg>
          Help
        </div>
      </div>
    </div>
  );
}

// Hand-drawn markup that was on the screenshot: three boxes and their numbers.
function Annotations() {
  const number = "absolute font-bold text-[18px] leading-none text-[#f00000] font-['Liberation_Sans',sans-serif]";
  return (
    <>
      <div className="absolute left-[927px] top-[46px] w-[175px] h-[32px] border-2 border-[#0000f0]" />
      <div className="absolute left-[442px] top-[419px] w-[55px] h-[82px] border-2 border-[#0000f0]" />
      <div className="absolute left-[883px] top-[427px] w-[400px] h-[50px] border-2 border-[#0000f0]" />
      <span className={`${number} left-[1005px] top-[35px]`}>2</span>
      <span className={`${number} left-[472px] top-[403px]`}>1</span>
      <span className={`${number} left-[1065px] top-[412px]`}>3</span>
      <span className="absolute left-[1172px] top-[714px] text-[17px] leading-[20px] text-[#8a8a8a]/80 font-['Liberation_Sans',sans-serif] whitespace-nowrap">CSDN @qq_28219531</span>
    </>
  );
}

export default function App() {
  return (
    <div className="relative w-[1359px] h-[743px] overflow-hidden flex flex-col bg-[#eeeeee] font-['DejaVu_Sans',sans-serif]">
      <div className="h-[23px] shrink-0 flex items-center pl-[3px] bg-gradient-to-b from-[#3c3b37] to-[#4a4945]">
        <span className="font-bold text-[15px] text-[#dfdbd2] font-['Noto_Sans',sans-serif]">* Java OpenStreetMap Editor</span>
        <Tray />
      </div>
      <MenuBar />
      <Toolbar />
      <div className="h-[659px] shrink-0 flex">
        <SideBar />
        <MapCanvas />
        <div className="w-[4px] shrink-0 bg-[#eeeeee]" />
        <RightPanel />
      </div>
      <PresetDialog />
      <Annotations />
    </div>
  );
}
